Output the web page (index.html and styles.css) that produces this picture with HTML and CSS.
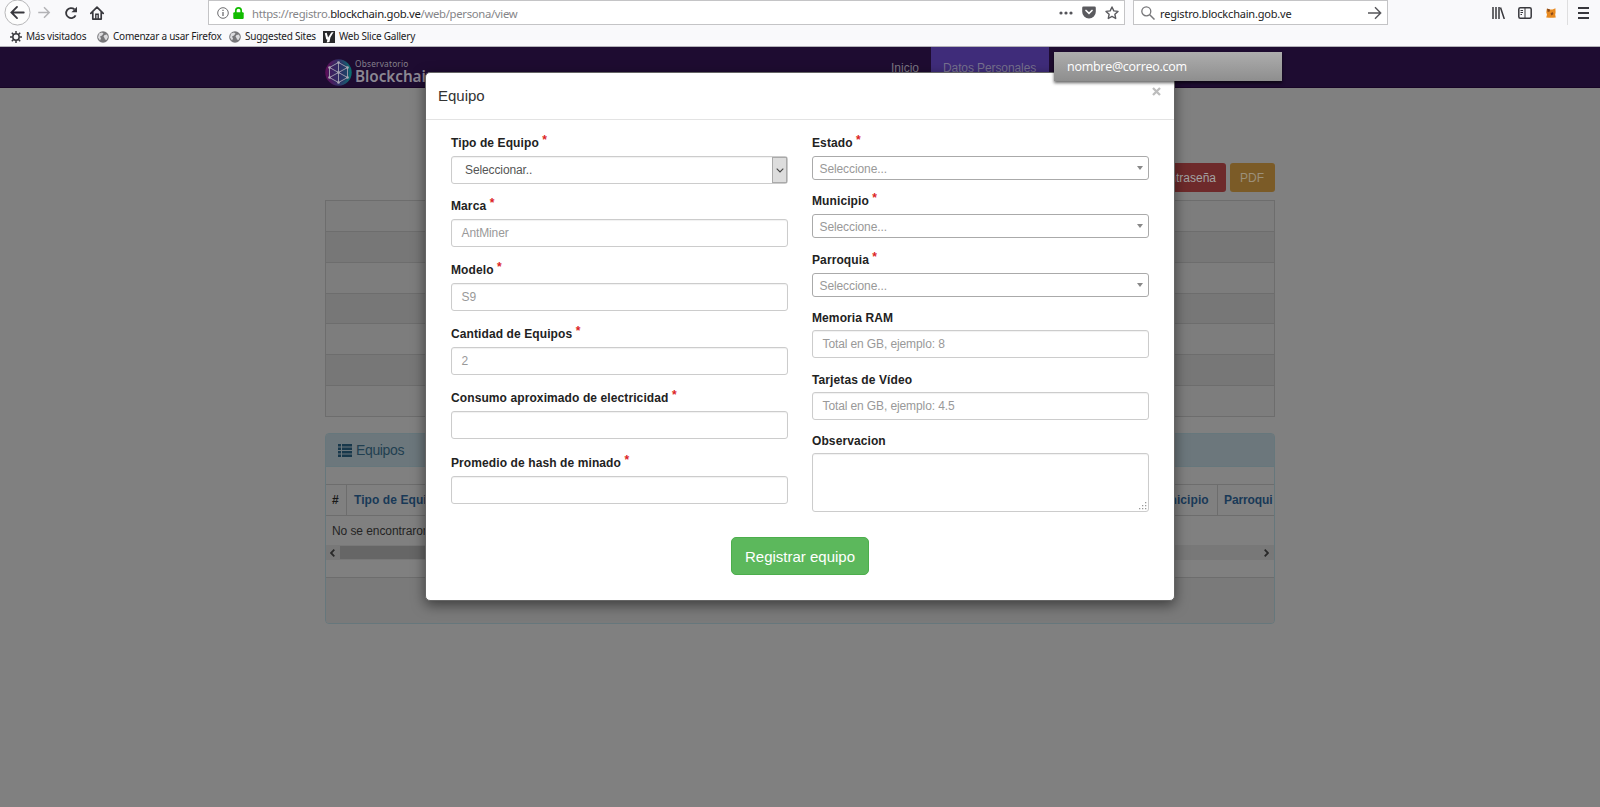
FILE: index.html
```html
<!DOCTYPE html>
<html lang="es">
<head>
<meta charset="utf-8">
<title>Registro Blockchain</title>
<link rel="stylesheet" href="styles.css">
</head>
<body>
<header class="browser">
  <div class="toolbar">
    <div class="nav-buttons">
      <svg class="back" viewBox="0 0 28 28"><circle cx="14" cy="14" r="13" fill="#fdfdfd" stroke="#b4b4b6"/><path d="M20.500 14H8M13.500 8.200 7.700 14l5.800 5.800" fill="none" stroke="#38383d" stroke-width="1.900" stroke-linecap="round"/></svg>
      <svg class="forward" viewBox="0 0 14 14"><path d="M.8 7h11.500M7 1.400 12.600 7 7 12.600" fill="none" stroke="#b3b3b6" stroke-width="1.600"/></svg>
      <svg class="reload" viewBox="0 0 14 14"><path d="M11.600 9.300A5 5 0 1 1 10.400 3.300" fill="none" stroke="#38383d" stroke-width="1.800"/><path d="M13 .7v5.600H7.400z" fill="#38383d"/></svg>
      <svg class="home" viewBox="0 0 14 14"><path d="M.8 7.300 7 1.200l6.200 6.100M2.800 6.500v6.600h8.400V6.500" fill="none" stroke="#38383d" stroke-width="1.700" stroke-linejoin="round" stroke-linecap="round"/><path d="M5.800 13V8.300h2.400V13" fill="none" stroke="#38383d" stroke-width="1.400"/></svg>
    </div>
    <div class="urlbar">
      <svg class="info" viewBox="0 0 12 12"><circle cx="6" cy="6" r="5.300" fill="none" stroke="#6d6d70"/><path d="M6 5v4M6 2.800v1.300" stroke="#6d6d70" stroke-width="1.300"/></svg>
      <svg class="lock" viewBox="0 0 11 12"><path d="M2.800 6V3.600a2.700 2.700 0 0 1 5.400 0V6" fill="none" stroke="#12bc00" stroke-width="1.700"/><rect x=".3" y="5.200" width="10.400" height="6.800" rx="1" fill="#12bc00"/></svg>
      <span class="url">https://registro.<b>blockchain.gob.ve</b>/web/persona/view</span>
      <svg class="dots" viewBox="0 0 14 4"><circle cx="2" cy="2" r="1.600"/><circle cx="7" cy="2" r="1.600"/><circle cx="12" cy="2" r="1.600"/></svg>
      <svg class="pocket" viewBox="0 0 14 13"><path d="M1.500.5h11a1.300 1.300 0 0 1 1.300 1.300v4A6.800 6.800 0 0 1 .2 5.800V1.800A1.300 1.300 0 0 1 1.500.5z" fill="#5a5a5e"/><path d="M4 4.500 7 7.300l3-2.800" fill="none" stroke="#fff" stroke-width="1.700" stroke-linecap="round"/></svg>
      <svg class="star" viewBox="0 0 14 14"><path d="m7 1 1.800 3.900 4.200.5-3.100 2.900.8 4.200L7 10.400l-3.700 2.100.8-4.200L1 5.400l4.200-.5z" fill="none" stroke="#5a5a5e" stroke-width="1.400" stroke-linejoin="round"/></svg>
    </div>
    <div class="searchbar">
      <svg class="lens" viewBox="0 0 14 14"><circle cx="5.300" cy="5.300" r="4.500" fill="none" stroke="#77777a" stroke-width="1.300"/><path d="m8.500 8.500 5 5" stroke="#77777a" stroke-width="1.500"/></svg>
      <span class="query">registro.blockchain.gob.ve</span>
      <svg class="go" viewBox="0 0 14 14"><path d="M0 7h12.500M7 1.300 12.700 7 7 12.700" fill="none" stroke="#55555a" stroke-width="1.400"/></svg>
    </div>
    <div class="tools">
      <svg class="library" viewBox="0 0 13 12"><path d="M1 0v12M4 0v12M7 0v12M8.500.5 12.300 12" fill="none" stroke="#38383d" stroke-width="1.500"/></svg>
      <svg class="side" viewBox="0 0 14 12"><rect x=".8" y=".8" width="12.400" height="10.400" rx="1.500" fill="none" stroke="#38383d" stroke-width="1.500"/><path d="M7 1v10M2.500 3.500H5M2.500 5.500H5M2.500 7.500H4" stroke="#38383d"/></svg>
      <svg class="fox" viewBox="0 0 10 10"><path d="m.8.8 3 .7h2.800L9.400.2l.2 4-.4 2.600.6 2.700-2.600.2H3L.2 9.500 1 6.800.3 4.200z" fill="#e88a20"/><path d="m1 .5 3 1-.3 2-2 .5zM4.500 5.500l2-1.500 1 2-2 1.500z" fill="#8a4a1a"/></svg>
      <span class="separator"></span>
      <svg class="menu" viewBox="0 0 11 12"><path d="M0 1h11M0 6h11M0 11h11" stroke="#38383d" stroke-width="1.800"/></svg>
    </div>
  </div>
  <nav class="bookmarks">
    <span class="mark visited"><svg viewBox="0 0 12 12"><circle cx="6" cy="6" r="3.200" fill="none" stroke="#38383d" stroke-width="1.500"/><path d="M6 0v2.500M6 9.500V12M0 6h2.500M9.500 6H12M1.800 1.800l1.700 1.700M8.500 8.500l1.700 1.700M10.200 1.800 8.500 3.500M3.500 8.500l-1.700 1.700" stroke="#38383d" stroke-width="1.500"/></svg><span>Más visitados</span></span>
    <span class="mark start"><svg viewBox="0 0 12 12"><circle cx="6" cy="6" r="5.800" fill="#77777a"/><path d="M2 2.500 5 1.500l1.500 1L5 4.500 3 5.500l1 2-1 2-2-3zM7.500 4l2.500-.5 1 2.500-1.500 3-1.500-.5L7.500 7 6.500 5.500z" fill="#dcdcdf"/></svg><span>Comenzar a usar Firefox</span></span>
    <span class="mark sites"><svg viewBox="0 0 12 12"><circle cx="6" cy="6" r="5.800" fill="#77777a"/><path d="M2 2.500 5 1.500l1.500 1L5 4.500 3 5.500l1 2-1 2-2-3zM7.500 4l2.500-.5 1 2.500-1.500 3-1.500-.5L7.500 7 6.500 5.500z" fill="#dcdcdf"/></svg><span>Suggested Sites</span></span>
    <span class="mark slice"><svg viewBox="0 0 13 13"><path d="M0 0h13v13H0z" fill="#29292b"/><path d="M2 2.500 4 2l1.500 5L9 1.500 11.500 1 8 7l-1 5-3 .5.800-3L3.500 9z" fill="#fff"/></svg><span>Web Slice Gallery</span></span>
  </nav>
</header>

<main class="page">
  <div class="navbar">
    <div class="container navrow">
      <svg class="logo" viewBox="0 0 27 27"><defs><linearGradient id="ring"><stop offset="0" stop-color="#5e0c57"/><stop offset=".5" stop-color="#343069"/><stop offset="1" stop-color="#087270"/></linearGradient></defs><circle cx="13.500" cy="13.500" r="13.200" fill="url(#ring)"/><circle cx="13.500" cy="13.500" r="10.500" fill="#2a2460" opacity=".4"/><g fill="none" stroke="#9a96a8" stroke-width="1"><path d="m13.500 3.500 9 5v10l-9 5-9-5v-10zM4.500 8.500l9 5 9-5M13.500 13.500v10M13.500 3.500v10M4.500 18.500l9-5 9 5"/></g><g fill="#aaa7b5"><circle cx="13.500" cy="3.500" r="1.300"/><circle cx="22.500" cy="8.500" r="1.300"/><circle cx="22.500" cy="18.500" r="1.300"/><circle cx="13.500" cy="23.500" r="1.300"/><circle cx="4.500" cy="18.500" r="1.300"/><circle cx="4.500" cy="8.500" r="1.300"/><circle cx="13.500" cy="13.500" r="1.300"/></g></svg>
      <div class="brand"><span class="brand-top">Observatorio</span><span class="brand-name">Blockchain</span></div>
      <div class="links"><span class="link inicio">Inicio</span><span class="link active">Datos Personales</span></div>
    </div>
  </div>
  <div class="container content">
    <div class="actions"><span class="btn danger">Cambiar contraseña</span><span class="btn warning">PDF</span></div>
    <div class="details"><div></div><div></div><div></div><div></div><div></div><div></div><div></div></div>
    <section class="panel">
      <div class="panel-heading"><svg viewBox="0 0 14 13"><path d="M0 0h3v2.500H0zM4 0h10v2.500H4zM0 3.500h3V6H0zM4 3.500h10V6H4zM0 7h3v2.500H0zM4 7h10v2.500H4zM0 10.500h3V13H0zM4 10.500h10V13H4z" fill="#18384b"/></svg><span>Equipos</span></div>
      <div class="grid-head"><span class="c-num">#</span><span class="c-type">Tipo de Equipo</span><span class="c-mun">Municipio</span><span class="c-par">Parroqui</span></div>
      <div class="grid-empty">No se encontraron resultados.</div>
      <div class="scroll"><svg viewBox="0 0 5 8"><path d="M4.300.7 1 4l3.300 3.300"/></svg><i></i><svg viewBox="0 0 5 8"><path d="M.7.7 4 4 .7 7.300"/></svg></div>
      <div class="panel-footer"></div>
    </section>
  </div>

  <div class="modal">
    <div class="modal-head"><span class="title">Equipo</span><svg class="close" viewBox="0 0 9 9"><path d="m1 1 7 7M8 1 1 8" stroke="#bdbdbd" stroke-width="2.300"/></svg></div>
    <div class="form">
      <div class="col left">
        <div class="field"><label>Tipo de Equipo <sup>*</sup></label><div class="input select"><span>Seleccionar..</span><i><svg viewBox="0 0 8 5"><path d="m.7.7 3.300 3.300L7.300.7" fill="none" stroke="#444" stroke-width="1.100"/></svg></i></div></div>
        <div class="field"><label>Marca <sup>*</sup></label><div class="input">AntMiner</div></div>
        <div class="field"><label>Modelo <sup>*</sup></label><div class="input">S9</div></div>
        <div class="field"><label>Cantidad de Equipos <sup>*</sup></label><div class="input">2</div></div>
        <div class="field tall"><label>Consumo aproximado de electricidad <sup>*</sup></label><div class="input"></div></div>
        <div class="field"><label>Promedio de hash de minado <sup>*</sup></label><div class="input"></div></div>
      </div>
      <div class="col right">
        <div class="field combo-field"><label>Estado <sup>*</sup></label><div class="combo">Seleccione...</div></div>
        <div class="field combo-field"><label>Municipio <sup>*</sup></label><div class="combo">Seleccione...</div></div>
        <div class="field combo-field last"><label>Parroquia <sup>*</sup></label><div class="combo">Seleccione...</div></div>
        <div class="field plain"><label>Memoria RAM</label><div class="input">Total en GB, ejemplo: 8</div></div>
        <div class="field plain"><label>Tarjetas de Vídeo</label><div class="input">Total en GB, ejemplo: 4.5</div></div>
        <div class="field plain"><label>Observacion</label><div class="input area"><svg viewBox="0 0 8 8"><path d="M6 0h1.300v1.300H6zM3 3h1.300v1.300H3zM6 3h1.300v1.300H6zM0 6h1.300v1.300H0zM3 6h1.300v1.300H3zM6 6h1.300v1.300H6z" fill="#999"/></svg></div></div>
      </div>
    </div>
    <div class="submit"><span class="register">Registrar equipo</span></div>
  </div>
  <div class="email">nombre@correo.com</div>
</main>
</body>
</html>
```
FILE: styles.css
```css
* { box-sizing: border-box; }
body { margin: 0; width: 1600px; height: 807px; overflow: hidden; background: #808080; font: 12px/17px "Liberation Sans", Arial, sans-serif; color: #222; }
svg { display: block; flex: none; }
.browser { height: 47px; background: #f9f9fb; border-bottom: 1px solid #b4b3b9; font-family: "Noto Sans", "Open Sans", sans-serif; }
.toolbar { display: flex; height: 27px; align-items: flex-start; }
.nav-buttons { display: flex; align-items: center; width: 208px; height: 25px; padding-left: 4px; }
.back { width: 27px; height: 27px; margin-right: 6px; }
.forward { width: 14px; height: 13px; margin-right: 13px; }
.reload { width: 14px; height: 14px; margin-right: 12px; }
.home { width: 14px; height: 14px; }
.urlbar { display: flex; align-items: center; width: 917px; height: 25px; border: 1px solid #c4c4c6; background: #fff; padding-left: 8px; }
.info { width: 12px; height: 12px; margin-right: 4px; }
.lock { width: 11px; height: 12px; margin-right: 8px; }
.url { font-size: 11.3px; letter-spacing: -.31px; color: #858588; white-space: nowrap; width: 807px; padding-top: 2px; }
.url b { font-weight: 400; color: #1b1b1d; }
.dots { width: 14px; height: 4px; fill: #55555a; margin-right: 9px; }
.pocket { width: 14px; height: 13px; margin-right: 9px; }
.star { width: 14px; height: 14px; }
.searchbar { display: flex; align-items: center; margin-left: 8px; width: 255px; height: 25px; border: 1px solid #c4c4c6; background: #fff; padding-left: 7px; }
.lens { width: 14px; height: 14px; margin-right: 5px; }
.query { width: 208px; font-size: 11px; letter-spacing: -.19px; padding-top: 2px; white-space: nowrap; }
.go { width: 14px; height: 14px; }
.tools { display: flex; align-items: center; height: 25px; padding-left: 104px; }
.library { width: 13px; height: 12px; margin-right: 13px; }
.side { width: 14px; height: 12px; margin-right: 14px; }
.fox { width: 10px; height: 10px; margin-right: 11px; }
.separator { width: 1px; height: 25px; background: #dededf; margin-right: 10px; }
.menu { width: 11px; height: 12px; }
.bookmarks { display: flex; height: 19px; padding-left: 10px; }
.mark { display: flex; align-items: center; gap: 4px; height: 19px; font-size: 10px; letter-spacing: -.24px; color: #1b1b1d; white-space: nowrap; line-height: 18px; }
.mark > span { height: 19px; line-height: 18px; }
.mark svg { width: 12px; height: 12px; }
.visited { width: 87px; }
.start { width: 132px; }
.sites { width: 94px; }

.page { position: relative; height: 760px; background: #808080; }
.navbar { height: 41px; background: #1e0c31; border-bottom: 1px solid #180526; }
.container { width: 950px; margin: 0 auto; }
.navrow { display: flex; height: 40px; }
.logo { width: 27px; height: 27px; margin-top: 12px; }
.brand { display: flex; flex-direction: column; margin: 11px 0 0 3px; width: 516px; color: #85808c; font-family: "Noto Sans", sans-serif; }
.brand-top { font-size: 8.3px; line-height: 11px; letter-spacing: .2px; }
.brand-name { font-size: 15.3px; line-height: 15px; font-weight: 600; color: #8b8792; letter-spacing: -.05px; }
.links { display: flex; font-size: 12px; color: #7c7683; }
.link { height: 40px; line-height: 42px; }
.inicio { width: 60px; padding-left: 20px; }
.active { width: 118px; padding-left: 12px; background: #3f2c7a; color: #77718f; letter-spacing: -.1px; white-space: nowrap; }
.content { padding-top: 75px; }
.actions { display: flex; justify-content: flex-end; gap: 4px; height: 29px; }
.btn { height: 29px; padding: 0 11px; border-radius: 3px; line-height: 30px; color: #a3a3a3; }
.danger { background: #6e2a2b; padding-right: 10px; }
.warning { width: 45px; padding-left: 10px; background: #7b5b27; color: #9c907a; }
.details { margin-top: 8px; border: 1px solid #6d6d6d; border-bottom: 0; height: 217px; }
.details div { height: 30.85px; border-bottom: 1px solid #6d6d6d; }
.details div:nth-child(odd) { background: #7d7d7d; }
.details div:nth-child(even) { background: #777; }
.panel { margin-top: 16px; border: 1px solid #66777c; border-radius: 4px; height: 191px; overflow: hidden; }
.panel-heading { display: flex; height: 33px; background: #6c777c; border-bottom: 1px solid #66777c; padding: 1px 0 0 12px; align-items: center; gap: 4px; font-size: 14px; letter-spacing: -.35px; color: #213f50; }
.panel-heading svg { width: 14px; height: 13px; }
.grid-head { display: flex; margin-top: 17px; height: 32px; border: solid #6d6d6d; border-width: 1px 0; line-height: 31px; font-weight: 700; letter-spacing: .08px; color: #193957; white-space: nowrap; }
.grid-head span { flex: none; padding-left: 6px; border-right: 1px solid #6d6d6d; }
.grid-head .c-num { width: 21px; color: #191919; }
.grid-head .c-type { width: 799px; padding-left: 7px; }
.grid-head .c-mun { width: 72px; }
.grid-head .c-par { border: 0; letter-spacing: -.1px; }
.grid-empty { height: 29px; line-height: 31px; padding-left: 6px; letter-spacing: -.08px; color: #242424; }
.scroll { display: flex; align-items: center; height: 15px; padding: 0 5px 0 4px; background: #787878; }
.scroll svg { width: 5px; height: 8px; fill: none; stroke: #292929; stroke-width: 1.8px; }
.scroll i { width: 680px; height: 13px; background: #666; margin: 0 auto 0 5px; }
.panel-footer { margin-top: 17px; border-top: 1px solid #6d6d6d; height: 50px; background: #7a7a7a; }

.modal { position: absolute; left: 425px; top: 25px; width: 750px; height: 529px; background: #fff; border: 1px solid #656565; border-radius: 5px; box-shadow: 0 4px 13px rgba(0,0,0,.5); }
.modal-head { display: flex; justify-content: space-between; height: 47px; border-bottom: 1px solid #e3e3e3; padding: 14px 13px 0 12px; }
.title { font-size: 15px; line-height: 18px; color: #333; }
.close { width: 9px; height: 9px; }
.form { display: flex; padding: 12px 25px 0 25px; justify-content: space-between; height: 417px; }
.col { width: 337px; }
.right { width: 337px; }
.field { height: 64px; }
.left .field:first-child { height: 63px; }
.left .tall { height: 65px; }
label { display: block; height: 24px; padding-top: 3px; line-height: 17px; font-weight: 700; letter-spacing: .1px; white-space: nowrap; }
sup { color: #dc1f26; font-size: 12px; line-height: 0; vertical-align: 3px; letter-spacing: 0; font-weight: 700; }
.input { height: 28px; border: 1px solid #ccc; border-radius: 3px; padding: 0 9.5px; line-height: 27px; letter-spacing: -.11px; color: #999; box-shadow: inset 0 1px 1px rgba(0,0,0,.06); }
.select { display: flex; justify-content: space-between; padding: 0 0 0 13px; color: #555; }
.select i { display: flex; align-items: center; justify-content: center; width: 15px; background: #ddd; border: 1px solid #aaa; }
.select svg { width: 8px; height: 5px; }
.combo-field { height: 58px; }
.combo-field:nth-child(2) { height: 59px; }
.combo-field.last { height: 59px; }
.combo { position: relative; height: 24px; line-height: 24px; border: 1px solid #aaa; border-radius: 3px; padding-left: 6.5px; letter-spacing: -.1px; color: #999; }
.combo::after { content: ""; position: absolute; right: 5px; top: 9px; border: solid transparent; border-width: 4px 3.5px 0; border-top-color: #888; }
.right .plain { height: 61.5px; }
.right .plain label { height: 22px; padding-top: 2px; }
.right .area { height: 59px; padding: 0; display: flex; justify-content: flex-end; align-items: flex-end; }
.area svg { width: 8px; height: 8px; margin: 1px; }
.submit { display: flex; justify-content: center; }
.register { width: 138px; height: 38px; border: 1px solid #4cae4c; border-radius: 5px; background: #5cb85c; color: #fff; font-size: 15px; line-height: 37px; text-align: center; }
.email { position: absolute; left: 1054px; top: 5px; width: 228px; height: 29px; background: linear-gradient(#adadad, #8e8e8e); box-shadow: 0 2px 3px rgba(0,0,0,.6); color: #fff; font: 12.5px/29px "Open Sans", sans-serif; letter-spacing: -.27px; padding-left: 13px; }
```
